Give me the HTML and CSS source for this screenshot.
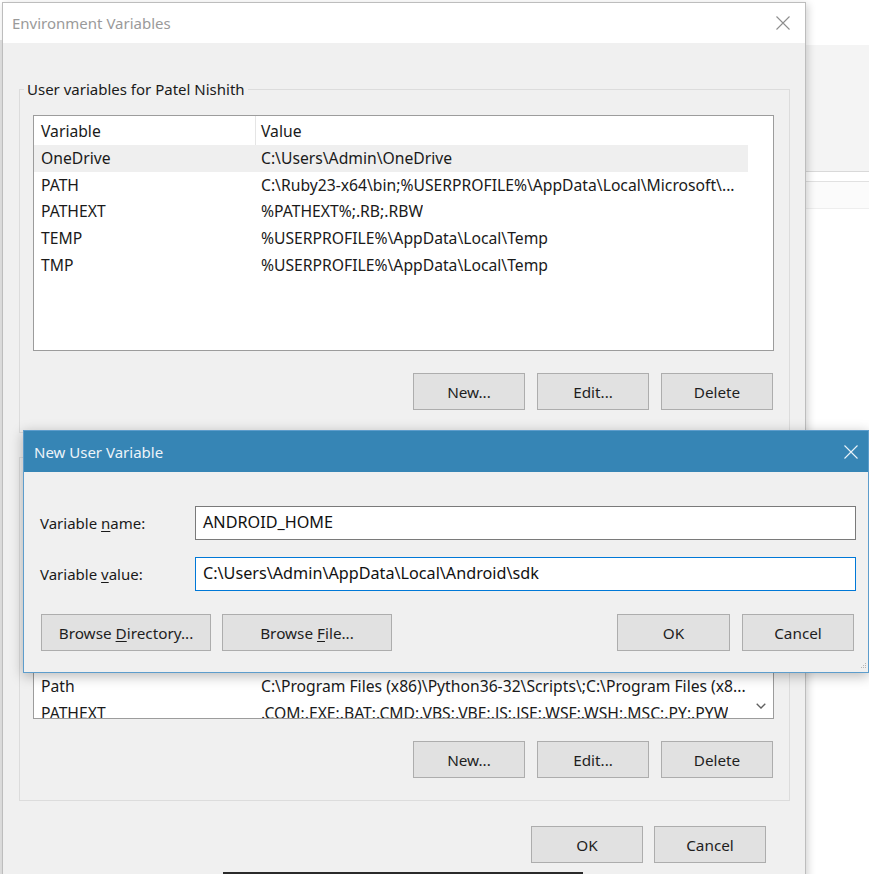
FILE: index.html
```html
<!DOCTYPE html>
<html lang="en">
<head>
<meta charset="utf-8">
<title>Environment Variables</title>
<link rel="stylesheet" href="styles.css">
</head>
<body>
<div class="desktop">
  <div class="bg-top"></div>
  <div class="bg-band"></div>
  <div class="bg-strip"></div>
  <div class="bg-strip2"></div>
  <div class="bg-left"></div>

  <div class="win main">
    <div class="titlebar">
      <span class="title">Environment Variables</span>
      <svg class="close" width="14" height="14" viewBox="0 0 14 14"><path d="M0.5 0.5L13.5 13.5M13.5 0.5L0.5 13.5" stroke="#8e8e8e" stroke-width="1.1" fill="none"/></svg>
    </div>
    <div class="winbody">
      <fieldset class="group">
        <legend>User variables for Patel Nishith</legend>
        <div class="list">
          <div class="list-head"><span class="c1">Variable</span><span class="c2">Value</span></div>
          <div class="row sel"><span class="c1">OneDrive</span><span class="c2">C:\Users\Admin\OneDrive</span></div>
          <div class="row"><span class="c1">PATH</span><span class="c2">C:\Ruby23-x64\bin;%USERPROFILE%\AppData\Local\Microsoft\...</span></div>
          <div class="row"><span class="c1">PATHEXT</span><span class="c2">%PATHEXT%;.RB;.RBW</span></div>
          <div class="row"><span class="c1">TEMP</span><span class="c2">%USERPROFILE%\AppData\Local\Temp</span></div>
          <div class="row"><span class="c1">TMP</span><span class="c2">%USERPROFILE%\AppData\Local\Temp</span></div>
        </div>
        <div class="btnrow">
          <button class="btn">New...</button>
          <button class="btn">Edit...</button>
          <button class="btn">Delete</button>
        </div>
      </fieldset>

      <fieldset class="group group-sys">
        <legend>System variables</legend>
        <div class="list">
          <div class="list-head"><span class="c1">Variable</span><span class="c2">Value</span></div>
          <div class="row"><span class="c1">ComSpec</span><span class="c2">C:\WINDOWS\system32\cmd.exe</span></div>
          <div class="row"><span class="c1">DriverData</span><span class="c2">C:\Windows\System32\Drivers\DriverData</span></div>
          <div class="row"><span class="c1">JAVA_HOME</span><span class="c2">C:\Program Files\Java\jdk1.8.0_151</span></div>
          <div class="row"><span class="c1">NUMBER_OF_PROCESSORS</span><span class="c2">4</span></div>
          <div class="row"><span class="c1">OnlineServices</span><span class="c2">Online Services</span></div>
          <div class="row"><span class="c1">OS</span><span class="c2">Windows_NT</span></div>
          <div class="row"><span class="c1">Path</span><span class="c2">C:\Program Files (x86)\Python36-32\Scripts\;C:\Program Files (x8...</span></div>
          <div class="row"><span class="c1">PATHEXT</span><span class="c2">.COM;.EXE;.BAT;.CMD;.VBS;.VBE;.JS;.JSE;.WSF;.WSH;.MSC;.PY;.PYW</span></div>
          <svg class="scroll-down" width="10" height="6" viewBox="0 0 10 6"><path d="M0.7 0.7L5 5L9.3 0.7" stroke="#606060" stroke-width="1.3" fill="none"/></svg>
        </div>
        <div class="btnrow">
          <button class="btn">New...</button>
          <button class="btn">Edit...</button>
          <button class="btn">Delete</button>
        </div>
      </fieldset>

      <div class="footer">
        <button class="btn">OK</button>
        <button class="btn">Cancel</button>
      </div>
    </div>
  </div>

  <div class="win dialog">
    <div class="dtitlebar">
      <span class="dtitle">New User Variable</span>
      <svg class="close" width="14" height="14" viewBox="0 0 14 14"><path d="M0.5 0.5L13.5 13.5M13.5 0.5L0.5 13.5" stroke="#eaf3f9" stroke-width="1.1" fill="none"/></svg>
    </div>
    <div class="dbody">
      <div class="field">
        <label class="flabel">Variable <u>n</u>ame:</label>
        <div class="input">ANDROID_HOME</div>
      </div>
      <div class="field field2">
        <label class="flabel">Variable <u>v</u>alue:</label>
        <div class="input focused">C:\Users\Admin\AppData\Local\Android\sdk</div>
      </div>
      <div class="dbtns">
        <button class="btn wide">Browse <u>D</u>irectory...</button>
        <button class="btn wide">Browse <u>F</u>ile...</button>
        <span class="spacer"></span>
        <button class="btn ok">OK</button>
        <button class="btn">Cancel</button>
      </div>
    </div>
    <svg class="grip" width="9" height="9" viewBox="0 0 9 9"><g fill="#b5b5b5"><rect x="7" y="1" width="1" height="1"/><rect x="5" y="3" width="1" height="1"/><rect x="7" y="3" width="1" height="1"/><rect x="3" y="5" width="1" height="1"/><rect x="5" y="5" width="1" height="1"/><rect x="7" y="5" width="1" height="1"/></g></svg>
  </div>

  <div class="edge-bar"></div>
</div>
</body>
</html>
```

FILE: styles.css
```css
html, body {
  margin: 0;
  padding: 0;
}
body {
  font-family: "Noto Sans", "Open Sans", sans-serif;
  font-size: 15px;
  color: #1a1a1a;
}
.desktop {
  position: relative;
  width: 869px;
  height: 874px;
  overflow: hidden;
  background: #ffffff;
}
.bg-top { height: 45px; }
.bg-band {
  height: 126px;
  background: #f4f4f4;
  border-bottom: 1px solid #d9d9d9;
}
.bg-strip {
  height: 9px;
  border-bottom: 1px solid #e1e1e1;
}
.bg-strip2 {
  height: 26px;
  background: #fbfbfb;
  border-bottom: 1px solid #eeeeee;
}
.bg-left {
  position: absolute;
  left: 0;
  top: 40px;
  width: 2px;
  height: 834px;
  background: #e4e4e4;
}

.win { box-sizing: border-box; }

.main {
  position: absolute;
  left: 2px;
  top: 2px;
  width: 804px;
  height: 900px;
  background: #f0f0f0;
  border: 1px solid #bdbdbd;
  box-shadow: 2px 2px 8px rgba(0,0,0,0.18);
}
.titlebar {
  height: 40px;
  background: #ffffff;
  display: flex;
  align-items: center;
  justify-content: space-between;
  padding-left: 9px;
  padding-right: 15px;
}
.title {
  color: #9a9a9a;
  font-size: 15px;
}
.winbody {
  padding: 36px 0 0 16px;
}
.group {
  box-sizing: border-box;
  width: 771px;
  margin: 0;
  padding: 0 0 22px 0;
  border: 1px solid #dcdcdc;
  min-width: 0;
}
.group legend {
  margin-left: 4px;
  padding: 0 3px;
  line-height: 20px;
  font-size: 15px;
}
.group-sys {
  margin-top: 14px;
}
.list {
  position: relative;
  box-sizing: border-box;
  width: 741px;
  height: 236px;
  margin: 16px 0 0 13px;
  border: 1px solid #9c9c9c;
  background: #ffffff;
  overflow: hidden;
  font-size: 15.7px;
}
.list-head, .row {
  display: flex;
  width: 714px;
  white-space: nowrap;
}
.list-head {
  height: 29px;
  line-height: 30px;
}
.row {
  height: 26.7px;
  line-height: 27px;
}
.c1 {
  box-sizing: border-box;
  width: 222px;
  padding-left: 7px;
  flex: none;
  overflow: hidden;
}
.list-head .c1 {
  border-right: 1px solid #e5e5e5;
}
.c2 {
  padding-left: 5px;
  overflow: hidden;
}
.row.sel {
  background: #efefef;
}
.scroll-down {
  position: absolute;
  left: 722px;
  top: 219px;
}
.btnrow {
  display: flex;
  justify-content: flex-end;
  gap: 12px;
  margin-top: 22px;
  padding-right: 16px;
}
.btn {
  box-sizing: border-box;
  width: 112px;
  height: 37px;
  padding: 0;
  margin: 0;
  background: #e1e1e1;
  border: 1px solid #adadad;
  border-radius: 0;
  font-family: inherit;
  font-size: 15.3px;
  color: #1e1e1e;
}
.btn u { text-underline-offset: 2px; }
.footer {
  display: flex;
  justify-content: flex-end;
  gap: 11px;
  width: 771px;
  box-sizing: border-box;
  margin-top: 25px;
  padding-right: 24px;
}

.dialog {
  position: absolute;
  left: 23px;
  top: 430px;
  width: 846px;
  background: #f0f0f0;
  border: 1px solid #5d9dcc;
  box-shadow: 0 3px 12px rgba(0,0,0,0.28);
}
.dtitlebar {
  height: 41px;
  background: #3685b5;
  display: flex;
  align-items: center;
  justify-content: space-between;
  padding-left: 10px;
  padding-right: 10px;
}
.dtitle {
  color: #edf4f9;
  font-size: 15px;
}
.dbody {
  padding: 34px 12px 21px 16px;
}
.field {
  display: flex;
  align-items: center;
}
.field2 {
  margin-top: 17px;
}
.flabel {
  width: 155px;
  flex: none;
}
.flabel u { text-underline-offset: 2px; }
.input {
  box-sizing: border-box;
  width: 661px;
  height: 34px;
  line-height: 31px;
  padding-left: 7px;
  border: 1px solid #7a7a7a;
  background: #ffffff;
  color: #111;
  white-space: nowrap;
  font-size: 16.2px;
}
.input.focused {
  border-color: #0078d7;
}
.dbtns {
  display: flex;
  margin-top: 23px;
  padding-left: 1px;
  padding-right: 2px;
  gap: 11px;
}
.btn.wide { width: 170px; }
.btn.ok { width: 113px; margin-right: 1px; }
.spacer { flex: 1; }
.grip {
  position: absolute;
  right: 1px;
  bottom: 1px;
}
.edge-bar {
  position: absolute;
  left: 223px;
  top: 872px;
  width: 360px;
  height: 2px;
  background: #2a2a2a;
}
```
